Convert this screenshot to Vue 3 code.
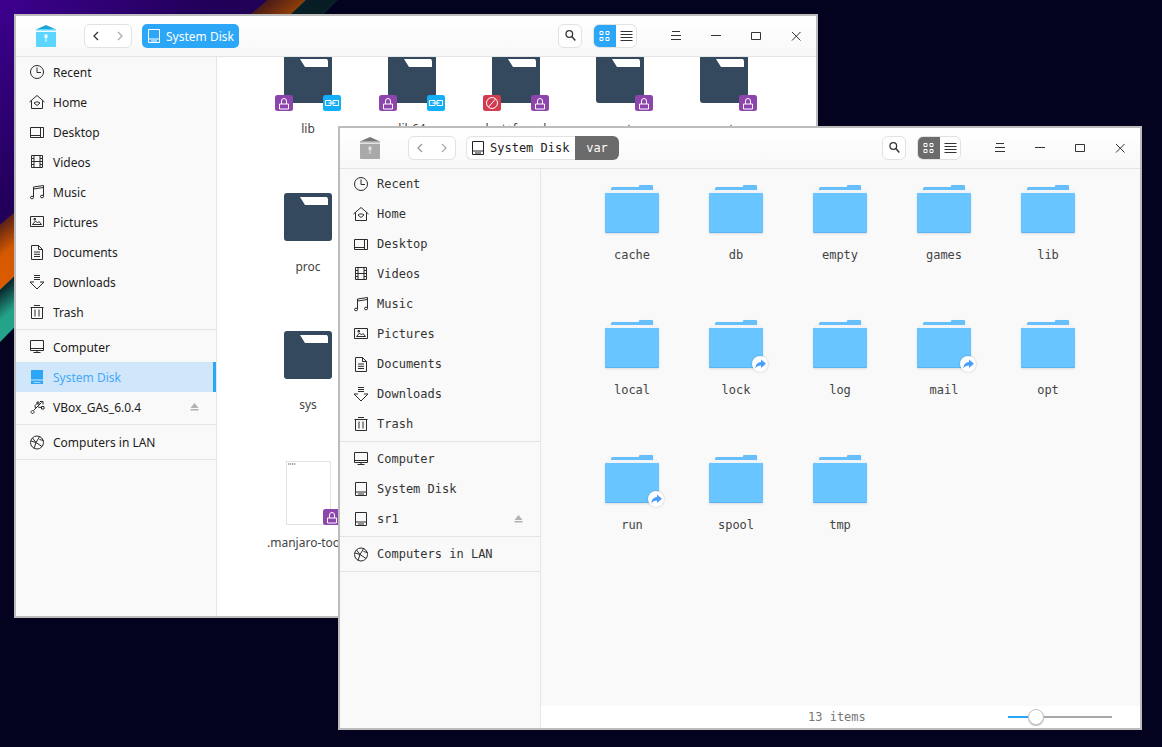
<template>
  <div class="desktop">
    <svg class="wallpaper" viewBox="0 0 1162 747">
      <defs>
        <linearGradient id="orangeBand" x1="0" y1="1" x2="1" y2="0">
          <stop offset="0" stop-color="#dc5c00" />
          <stop offset="1" stop-color="#8a3c08" />
        </linearGradient>
        <linearGradient id="greenBand" x1="0" y1="1" x2="1" y2="0">
          <stop offset="0" stop-color="#24a58c" />
          <stop offset="1" stop-color="#0f6a58" />
        </linearGradient>
        <linearGradient id="orangeShade" gradientUnits="userSpaceOnUse" x1="0" y1="225" x2="16" y2="244">
          <stop offset="0" stop-color="#2a0a20" stop-opacity="0.7" />
          <stop offset="1" stop-color="#2a0a20" stop-opacity="0" />
        </linearGradient>
        <linearGradient id="greenShade" gradientUnits="userSpaceOnUse" x1="0" y1="290" x2="15" y2="308">
          <stop offset="0" stop-color="#06101c" stop-opacity="0.85" />
          <stop offset="1" stop-color="#06101c" stop-opacity="0" />
        </linearGradient>
      </defs>
      <polygon points="0,342 337,0 1162,0 1162,747 0,747" fill="#04031f" />
      <polygon points="0,225 268,0 306,0 0,290" fill="url(#orangeBand)" />
      <polygon points="0,225 268,0 306,0 0,290" fill="url(#orangeShade)" />
      <polygon points="0,290 306,0 337,0 0,342" fill="url(#greenBand)" />
      <polygon points="0,290 306,0 337,0 0,342" fill="url(#greenShade)" />
    </svg>

    <div v-for="win in windows" :key="win.id" class="window" :class="'window-' + win.id">
      <header class="titlebar">
        <svg class="logo" viewBox="0 0 20 22">
          <path d="M0 4.500 10 0l10 4.500z" :fill="win.logo[0]" />
          <rect y="4" width="20" height="18" rx="1" :fill="win.logo[1]" />
          <rect y="5.500" width="20" height="1.500" :fill="win.logo[2]" />
          <path d="M8.500 9.500h3v3.500h-1V17h-1v-4h-1z" :fill="win.logo[2]" />
        </svg>

        <div class="nav">
          <svg class="tool-icon" viewBox="0 0 23 22"><path :stroke="win.backArrow" d="M13 7l-4 4 4 4" /></svg>
          <svg class="tool-icon" viewBox="0 0 23 22"><path stroke="#aaa" d="M10 7l4 4-4 4" /></svg>
        </div>

        <div v-if="win.id === 'back'" class="crumb crumb-current">
          <svg class="crumb-icon" viewBox="0 0 16 16"><path stroke="#fff" :d="icons.disk" /></svg>
          <span>System Disk</span>
        </div>
        <div v-else class="crumb-group">
          <div class="crumb crumb-plain">
            <svg class="crumb-icon" viewBox="0 0 16 16"><path stroke="#222" :d="icons.disk" /></svg>
            <span>System Disk</span>
          </div>
          <div class="crumb crumb-last">var</div>
        </div>

        <button class="search">
          <svg class="tool-icon" viewBox="0 0 22 22">
            <circle cx="10.300" cy="9" r="3.300" stroke="#333" stroke-width="1.300" fill="none" />
            <path stroke="#333" stroke-width="1.500" d="M12.800 11.500l3.500 4" />
          </svg>
        </button>

        <div class="view-toggle">
          <div class="view-btn view-on">
            <svg class="tool-icon" viewBox="0 0 21 22">
              <path stroke="#fff" d="M5.500 6.500h3v3h-3zM11.500 6.500h3v3h-3zM5.500 12.500h3v3h-3zM11.500 12.500h3v3h-3z" />
            </svg>
          </div>
          <div class="view-btn">
            <svg class="tool-icon" viewBox="0 0 21 22">
              <path stroke="#333" d="M4 6.500h12M4 9.500h12M4 12.500h12M4 15.500h12" />
            </svg>
          </div>
        </div>

        <div class="controls">
          <svg class="control" viewBox="0 0 40 24"><path d="M16 7.500h8M15 11.500h10M15 15.500h10" /></svg>
          <svg class="control" viewBox="0 0 40 24"><path d="M15 11.500h10" /></svg>
          <svg class="control" viewBox="0 0 40 24"><path d="M15.500 8.500h9v7h-9z" /></svg>
          <svg class="control" viewBox="0 0 40 24"><path d="M16 8l8.500 8.500M24.500 8 16 16.500" /></svg>
        </div>
      </header>

      <div class="body">
        <aside class="sidebar">
          <div v-for="(group, g) in win.places" :key="g" class="place-group">
            <div
              v-for="place in group"
              :key="place.label"
              class="place"
              :class="{ active: place.active }"
            >
              <svg class="side-icon" viewBox="0 0 16 16">
                <path v-if="place.active" class="solid" :d="icons.diskSolid" />
                <path v-else :d="icons[place.icon]" />
              </svg>
              <span class="place-label">{{ place.label }}</span>
              <svg v-if="place.eject" class="eject" viewBox="0 0 10 9">
                <path d="M5 0l4.500 5.500h-9zM.5 6.800h9V8.500h-9z" />
              </svg>
            </div>
          </div>
        </aside>

        <main v-if="win.id === 'back'" class="files">
          <div class="file-grid">
            <div
              v-for="file in backFiles"
              :key="file.name"
              class="file"
              :class="{ 'first-col': file.firstCol }"
            >
              <div class="file-icon">
                <div v-if="file.paper" class="paper"><span class="paper-text"></span></div>
                <svg v-else class="dark-folder" viewBox="0 0 48 48">
                  <rect width="48" height="48" rx="3" fill="#34495e" />
                  <path d="M16 4h27l1 2v6H21z" fill="#fff" />
                </svg>
                <svg
                  v-for="badge in file.badges"
                  :key="badge.kind"
                  class="badge"
                  :class="'badge-' + badge.side"
                  viewBox="0 0 18 16"
                >
                  <rect width="18" height="16" rx="2.500" :fill="badgeColors[badge.kind]" />
                  <path class="badge-mark" :d="badgeMarks[badge.kind]" />
                </svg>
              </div>
              <div class="file-name">{{ file.name }}</div>
            </div>
          </div>
        </main>

        <main v-else class="files files-front">
          <div class="folder-grid">
            <div v-for="folder in folders" :key="folder.name" class="folder">
              <div class="folder-icon">
                <svg class="folder-svg" viewBox="0 0 54 48">
                  <path d="M34 2V1a1 1 0 0 1 1-1h12a1 1 0 0 1 1 1v4H6V3.500L7 2z" fill="#66bffb" />
                  <rect x="3" y="5" width="49" height="3" fill="#f1f5f8" />
                  <rect y="8" width="54" height="40" rx="1" fill="#5ab3f5" />
                  <path d="M1 8h52a1 1 0 0 1 1 1v38H0V9a1 1 0 0 1 1-1z" fill="#69c5ff" />
                </svg>
                <div v-if="folder.shared" class="share">
                  <svg viewBox="0 0 16 16">
                    <path d="M9 3.500l5 4.300-5 4.200V9.600c-2.500 0-4.300.8-5.500 3 0-3.800 2-6.200 5.500-6.500z" fill="#4a9dfb" />
                  </svg>
                </div>
              </div>
              <div class="folder-name">{{ folder.name }}</div>
            </div>
          </div>
          <footer class="statusbar">
            <span class="count">13 items</span>
            <div class="slider">
              <div class="slider-fill"></div>
              <div class="slider-thumb"></div>
              <div class="slider-rest"></div>
            </div>
          </footer>
        </main>
      </div>
    </div>
  </div>
</template>

<script setup>
const icons = {
  clock: 'M14.500 8a6.500 6.500 0 1 1-13 0 6.500 6.500 0 0 1 13 0zM8 3.500V8.500h4',
  home: 'M.5 8 8 1.500 15.500 8M2.500 6.500v8h11v-8M5 9c2-1.500 4-1.500 6 0l-3 2.500z',
  desktop: 'M1.500 3.500h13v10h-13zM11.500 3.500v10M1.500 11.500h10',
  videos: 'M2.500 1.500h11v12h-11zM5 1.500v12M11 1.500v12M5 7.500h6M2.500 4.500h2.500M2.500 7.500h2.500M2.500 10.500h2.500M11 4.500h2.500M11 7.500h2.500M11 10.500h2.500',
  music: 'M4.500 13V3l10-1.500V12M4.500 5l10-1.500M4.500 13.500a1.500 1.300 0 1 1-3 0 1.500 1.300 0 0 1 3 0zM14.500 12.500a1.500 1.300 0 1 1-3 0 1.500 1.300 0 0 1 3 0z',
  pictures: 'M1.500 2.500h13v10h-13zM3.500 10.500l3-3.500 2 2 1.500-1.500 2.500 3zM5 4.500h1.500V6H5z',
  documents: 'M2.500 1.500h7l4 4v10h-11zM9.500 1.500v4h4M5 8h6M5 10.300h6M5 12.500h6',
  downloads: 'M5 1.500h6M5 3.500h6M5 5.500h6M5 8H1l7 7 7-7h-4',
  trash: 'M1.500 3.500h13M5 1.500h6M2.500 3.500v11h11v-11M6 5.500v7M10 5.500v7',
  computer: 'M1.500 1.500h13v10h-13zM1.500 9.500h13M8 11.500V13.500M4.500 13.500h7',
  disk: 'M2.500 1.500h11v13h-11zM2.500 11h11M5 13h6',
  diskSolid: 'M2 1h12v9.500H2zM2 11.500h12V15H2zM4.500 13v.8h7V13z',
  usb: 'M3.500 11.500a1.500 1.500 0 1 0 .1 0zM4.500 11.500l8-8M11 2.500h3v3M6.500 9.500 6 6.500l2-2M9 8l3 .5M12.500 7.500h2.500V10h-2.500zM8 3h2v2H8z',
  globe: 'M14.500 8.500a6.500 6.500 0 1 1-13 0 6.500 6.500 0 0 1 13 0zM3.500 4 7 8.500l-2 6M2 7l5 1.500 6 4M7 8.500l4-6.500M10.500 5.500l4 1'
}

const makePlaces = (lastDisk) => [
  [
    { label: 'Recent', icon: 'clock' },
    { label: 'Home', icon: 'home' },
    { label: 'Desktop', icon: 'desktop' },
    { label: 'Videos', icon: 'videos' },
    { label: 'Music', icon: 'music' },
    { label: 'Pictures', icon: 'pictures' },
    { label: 'Documents', icon: 'documents' },
    { label: 'Downloads', icon: 'downloads' },
    { label: 'Trash', icon: 'trash' }
  ],
  [
    { label: 'Computer', icon: 'computer' },
    { label: 'System Disk', icon: 'disk', active: lastDisk === 'usb' },
    { label: lastDisk === 'usb' ? 'VBox_GAs_6.0.4' : 'sr1', icon: lastDisk, eject: true }
  ],
  [{ label: 'Computers in LAN', icon: 'globe' }]
]

const windows = [
  {
    id: 'back',
    logo: ['#1ea4d2', '#5cd5ff', '#eefaff'],
    backArrow: '#333',
    places: makePlaces('usb')
  },
  {
    id: 'front',
    logo: ['#777', '#a9a9a9', '#e2e2e2'],
    backArrow: '#999',
    places: makePlaces('disk')
  }
]

const badgeColors = { lock: '#8e44ad', link: '#12aef8', ban: '#d23c50' }
const badgeMarks = {
  lock: 'M4.500 9h9v5h-9zM6.500 9V6a2.500 2.500 0 0 1 5 0v3',
  link: 'M2.500 5.500h5.500v5H2.500zM10 5.500h5.500v5H10zM5.500 8h7',
  ban: 'M14.500 8a5.500 5.500 0 1 1-11 0 5.500 5.500 0 0 1 11 0zM5.500 12l7-8'
}

const lock = (side) => ({ kind: 'lock', side })
const backFiles = [
  { name: 'lib', badges: [lock('left'), { kind: 'link', side: 'right' }] },
  { name: 'lib64', badges: [lock('left'), { kind: 'link', side: 'right' }] },
  { name: 'lost+found', badges: [{ kind: 'ban', side: 'left' }, lock('right')] },
  { name: 'mnt', badges: [lock('right')] },
  { name: 'opt', badges: [lock('right')] },
  { name: 'proc', badges: [], firstCol: true },
  { name: 'sys', badges: [], firstCol: true },
  { name: '.manjaro-tools', badges: [lock('right')], firstCol: true, paper: true }
]

const folders = [
  { name: 'cache' },
  { name: 'db' },
  { name: 'empty' },
  { name: 'games' },
  { name: 'lib' },
  { name: 'local' },
  { name: 'lock', shared: true },
  { name: 'log' },
  { name: 'mail', shared: true },
  { name: 'opt' },
  { name: 'run', shared: true },
  { name: 'spool' },
  { name: 'tmp' }
]
</script>

<style>
html,
body {
  margin: 0;
  background: #04031f;
}
</style>

<style scoped>
.desktop {
  position: relative;
  width: 1162px;
  height: 747px;
  overflow: hidden;
  background: linear-gradient(135deg, #3d008f 0%, #22005a 11%, #170a48 22%, #04031f 34%);
}

.wallpaper {
  position: absolute;
  inset: 0;
  width: 1162px;
  height: 747px;
}

.window {
  position: absolute;
  width: 800px;
  height: 600px;
  border: 2px solid #bcbcbc;
  display: flex;
  flex-direction: column;
  background: #fff;
  font-family: "Noto Sans", sans-serif;
  font-size: 12px;
  color: #1c1c1c;
}

.window-back {
  left: 14px;
  top: 14px;
}

.window-front {
  left: 338px;
  top: 126px;
  font-family: "DejaVu Sans Mono", monospace;
  font-size: 12px;
  color: #333;
}

.titlebar {
  height: 40px;
  flex: none;
  display: flex;
  align-items: center;
  background: linear-gradient(#ffffff, #f8f8f8);
  border-bottom: 1px solid #e4e4e4;
  padding-left: 20px;
}

.logo {
  width: 20px;
  height: 22px;
  margin-right: 28px;
  flex: none;
}

.nav {
  width: 48px;
  height: 24px;
  box-sizing: border-box;
  display: flex;
  border: 1px solid #e2e2e2;
  border-radius: 6px;
  background: #fff;
  margin-right: 10px;
}

.tool-icon {
  flex: 1;
  width: 22px;
  height: 22px;
  fill: none;
  stroke-width: 1.3;
}

.view-btn .tool-icon {
  stroke-width: 1;
}

.crumb-group {
  display: flex;
  height: 24px;
}

.crumb {
  height: 24px;
  box-sizing: border-box;
  display: flex;
  align-items: center;
}

.crumb-icon {
  width: 16px;
  height: 16px;
  flex: none;
  margin-right: 4px;
  fill: none;
  stroke-width: 1;
}

.crumb-current {
  width: 97px;
  padding-left: 4px;
  background: #2ca7f8;
  color: #fff;
  border-radius: 5px;
}

.crumb-plain {
  width: 109px;
  padding-left: 3px;
  background: #fff;
  border: 1px solid #e2e2e2;
  border-right: 0;
  border-radius: 6px 0 0 6px;
  color: #222;
}

.crumb-last {
  width: 44px;
  justify-content: center;
  background: #6b6b6b;
  color: #fff;
  border-radius: 0 6px 6px 0;
}

.search {
  width: 24px;
  height: 24px;
  box-sizing: border-box;
  margin-left: auto;
  padding: 0;
  display: flex;
  align-items: center;
  justify-content: center;
  background: #fff;
  border: 1px solid #e2e2e2;
  border-radius: 6px;
}

.view-toggle {
  width: 44px;
  height: 24px;
  box-sizing: border-box;
  margin-left: 11px;
  display: flex;
  background: #fff;
  border: 1px solid #e2e2e2;
  border-radius: 6px;
  overflow: hidden;
}

.view-btn {
  flex: 1;
  display: flex;
}

.view-on {
  background: #2ca7f8;
}

.window-front .view-on {
  background: #6b6b6b;
}

.controls {
  display: flex;
  margin-left: 19px;
}

.control {
  width: 40px;
  height: 24px;
  fill: none;
  stroke: #333;
  stroke-width: 1;
}

.body {
  flex: 1;
  display: flex;
  min-height: 0;
}

.sidebar {
  width: 200px;
  flex: none;
  background: #f9f9f9;
  border-right: 1px solid #e6e6e6;
}

.place-group {
  padding-bottom: 2px;
  border-bottom: 1px solid #e4e4e4;
}

.place-group + .place-group {
  padding-top: 2px;
}

.place {
  height: 30px;
  display: flex;
  align-items: center;
  padding: 0 17px 0 13px;
}

.place.active {
  background: #cfe6fb;
  color: #45a9f8;
  box-shadow: inset -3px 0 0 #2ca7f8;
}

.side-icon {
  width: 16px;
  height: 16px;
  flex: none;
  margin-right: 8px;
  fill: none;
  stroke: #2b2b2b;
  stroke-width: 1;
}

.solid {
  fill: #2ca7f8;
  stroke: none;
  fill-rule: evenodd;
}

.place-label {
  flex: 1;
}

.eject {
  width: 9px;
  height: 8px;
  fill: #b2b2b2;
}

.files {
  flex: 1;
  min-width: 0;
  overflow: hidden;
  background: #fff;
}

.files-front {
  display: flex;
  flex-direction: column;
  background: #f9f9f9;
}

.file-grid {
  display: grid;
  grid-template-columns: repeat(5, 104px);
  grid-auto-rows: 138px;
  padding-left: 39px;
  margin-top: -10px;
}

.file {
  display: flex;
  flex-direction: column;
  align-items: center;
}

.first-col {
  grid-column: 1;
}

.file-icon {
  position: relative;
  width: 64px;
  height: 64px;
  display: flex;
  align-items: center;
  justify-content: center;
}

.dark-folder {
  width: 48px;
  height: 48px;
}

.paper {
  width: 45px;
  height: 64px;
  box-sizing: border-box;
  background: #fff;
  border: 1px solid #e2e2e2;
  padding: 1px 0 0 1px;
}

.paper-text {
  display: block;
  width: 8px;
  height: 2px;
  background: repeating-linear-gradient(90deg, #aaa 0 1px, #e4e4e4 1px 2px);
}

.badge {
  position: absolute;
  bottom: 0;
  width: 18px;
  height: 16px;
}

.badge-left {
  left: -1px;
}

.badge-right {
  right: -1px;
}

.badge-mark {
  fill: none;
  stroke: #fff;
  stroke-width: 1;
}

.file-name {
  margin-top: 10px;
  line-height: 16px;
  color: #444;
  white-space: nowrap;
}

.folder-grid {
  flex: 1;
  display: grid;
  grid-template-columns: repeat(5, 104px);
  grid-auto-rows: 135px;
  padding: 16px 0 0 39px;
}

.folder {
  display: flex;
  flex-direction: column;
  align-items: center;
}

.folder-icon {
  position: relative;
  width: 54px;
  height: 48px;
}

.folder-svg {
  display: block;
  width: 54px;
  height: 48px;
  filter: drop-shadow(0 1px 1px rgba(0, 0, 0, 0.12));
}

.share {
  position: absolute;
  left: 43px;
  top: 36px;
  width: 16px;
  height: 16px;
  border-radius: 50%;
  background: #fff;
  box-shadow: 0 0 2px rgba(0, 0, 0, 0.25);
}

.share svg {
  display: block;
}

.folder-name {
  margin-top: 14px;
  line-height: 16px;
  color: #444;
}

.statusbar {
  height: 22px;
  flex: none;
  display: flex;
  align-items: center;
  background: #fff;
}

.count {
  margin-left: 267px;
  color: #777;
}

.slider {
  position: relative;
  width: 104px;
  height: 2px;
  margin-left: 142px;
  display: flex;
  align-items: center;
}

.slider-fill {
  width: 20px;
  height: 2px;
  background: #2ca7f8;
}

.slider-rest {
  flex: 1;
  height: 2px;
  background: #a8a8a8;
}

.slider-thumb {
  width: 14px;
  height: 14px;
  flex: none;
  border-radius: 50%;
  background: #fff;
  border: 1px solid #c4c4c4;
  box-shadow: 0 1px 1px rgba(0, 0, 0, 0.25);
}
</style>
